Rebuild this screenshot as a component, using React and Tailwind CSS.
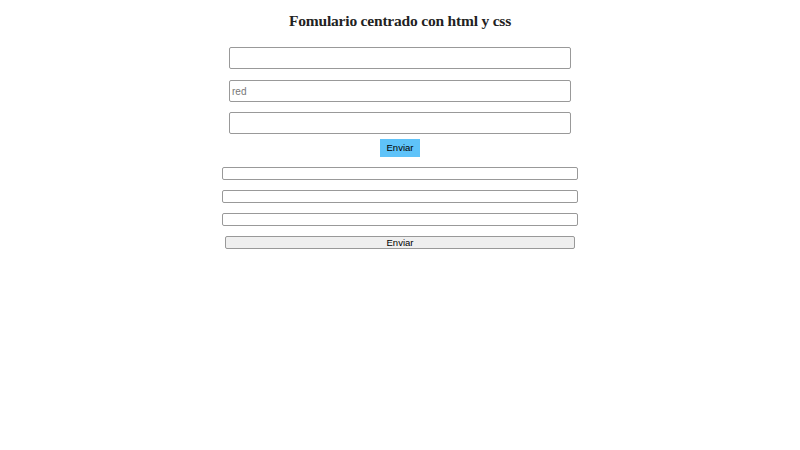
export default function App() {
  const sans = { fontFamily: '"Liberation Sans", Arial, sans-serif' };
  return (
    <div className="w-[800px] h-[450px] bg-white flex flex-col items-center" style={sans}>
      <h1
        className="mt-[11px] h-[20px] text-[15.5px] leading-[20px] font-bold text-[#222] tracking-[-0.2px]"
        style={{ fontFamily: '"Liberation Serif", "Times New Roman", serif' }}
      >
        Fomulario centrado con html y css
      </h1>
      <form className="mt-[16px] flex flex-col items-center">
        <input className="w-[342px] h-[22px] border border-[#999] rounded-[2px] bg-white px-[2px] text-[10px] outline-none" />
        <input
          placeholder="red"
          className="mt-[11px] w-[342px] h-[22px] border border-[#999] rounded-[2px] bg-white px-[2px] text-[10px] placeholder:text-[#777] outline-none"
          style={sans}
        />
        <input className="mt-[10px] w-[342px] h-[22px] border border-[#999] rounded-[2px] bg-white px-[2px] text-[10px] outline-none" />
        <button
          type="button"
          className="mt-[5px] w-[40px] h-[18px] bg-[#5fc3f9] text-[9.5px] text-black leading-[18px]"
          style={sans}
        >
          Enviar
        </button>
      </form>
      <form className="mt-[10px] flex flex-col items-center">
        <input className="w-[356px] h-[13px] border border-[#999] rounded-[2px] bg-white outline-none" />
        <input className="mt-[10px] w-[356px] h-[13px] border border-[#999] rounded-[2px] bg-white outline-none" />
        <input className="mt-[10px] w-[356px] h-[13px] border border-[#999] rounded-[2px] bg-white outline-none" />
        <button
          type="button"
          className="mt-[10px] w-[350px] h-[13px] border border-[#999] rounded-[2px] bg-[#efefef] text-[9.5px] leading-[11px] text-black"
          style={sans}
        >
          Enviar
        </button>
      </form>
    </div>
  );
}
